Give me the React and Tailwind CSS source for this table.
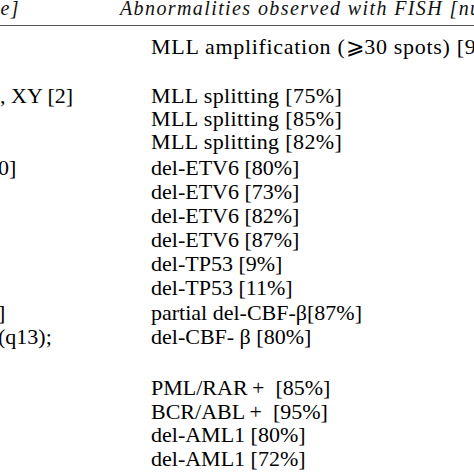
export default function App() {
  const rows = [
    { l: ", XY [2]", lm: "ml-0", r: "MLL splitting [75%]", t: "tracking-[0.4px]", h: "h-[23px]" },
    { l: "", r: "MLL splitting [85%]", t: "tracking-[0.4px]", h: "h-[23px]" },
    { l: "", r: "MLL splitting [82%]", t: "tracking-[0.4px]", h: "h-[26px]" },
    { l: "10]", lm: "ml-[-13px]", r: "del-ETV6 [80%]", h: "h-[24px]" },
    { l: "", r: "del-ETV6 [73%]", h: "h-[24px]" },
    { l: "", r: "del-ETV6 [82%]", h: "h-[24px]" },
    { l: "", r: "del-ETV6 [87%]", h: "h-[24px]" },
    { l: "", r: "del-TP53 [9%]", h: "h-[24px]" },
    { l: "", r: "del-TP53 [11%]", h: "h-[25px]" },
    { l: "]", lm: "ml-[-2px]", r: "partial del-CBF-β[87%]", h: "h-[24px]" },
    { l: "(q13);", lm: "ml-[-2px]", r: "del-CBF-\u00a0β [80%]", h: "h-[51px]" },
    { l: "", r: "PML/RAR\u2009+\u00a0 [85%]", h: "h-[24px]" },
    { l: "", r: "BCR/ABL\u2009+\u00a0 [95%]", h: "h-[23px]" },
    { l: "", r: "del-AML1 [80%]", h: "h-[24px]" },
    { l: "", r: "del-AML1 [72%]", h: "h-[24px]" },
  ];
  return (
    <div className="w-[474px] h-[474px] overflow-hidden bg-white text-black font-['Liberation_Serif','DejaVu_Serif',serif]">
      <div className="h-[26px] border-b-[1.5px] border-[#555] flex whitespace-nowrap italic text-[20px] leading-[20px] tracking-[1.4px] text-[#111]">
        <div className="w-[120px] shrink-0 overflow-hidden">
          <span className="block ml-[-11px] mt-[-2px]">ge]</span>
        </div>
        <div className="mt-[-2px]">Abnormalities observed with FISH [nuclei %]</div>
      </div>
      <div className="flex flex-col text-[22px] leading-[24px] whitespace-nowrap">
        <div className="flex h-[58px] pt-[9px]">
          <div className="w-[151px] shrink-0" />
          <div className="tracking-[0.7px]">MLL amplification (⩾30 spots) [90%]</div>
        </div>
        {rows.map((row, i) => (
          <div key={i} className={`flex ${row.h}`}>
            <div className="w-[151px] shrink-0 overflow-hidden">
              {row.l ? <span className={`block ${row.lm}`}>{row.l}</span> : null}
            </div>
            <div className={row.t || ""}>{row.r}</div>
          </div>
        ))}
      </div>
    </div>
  );
}
